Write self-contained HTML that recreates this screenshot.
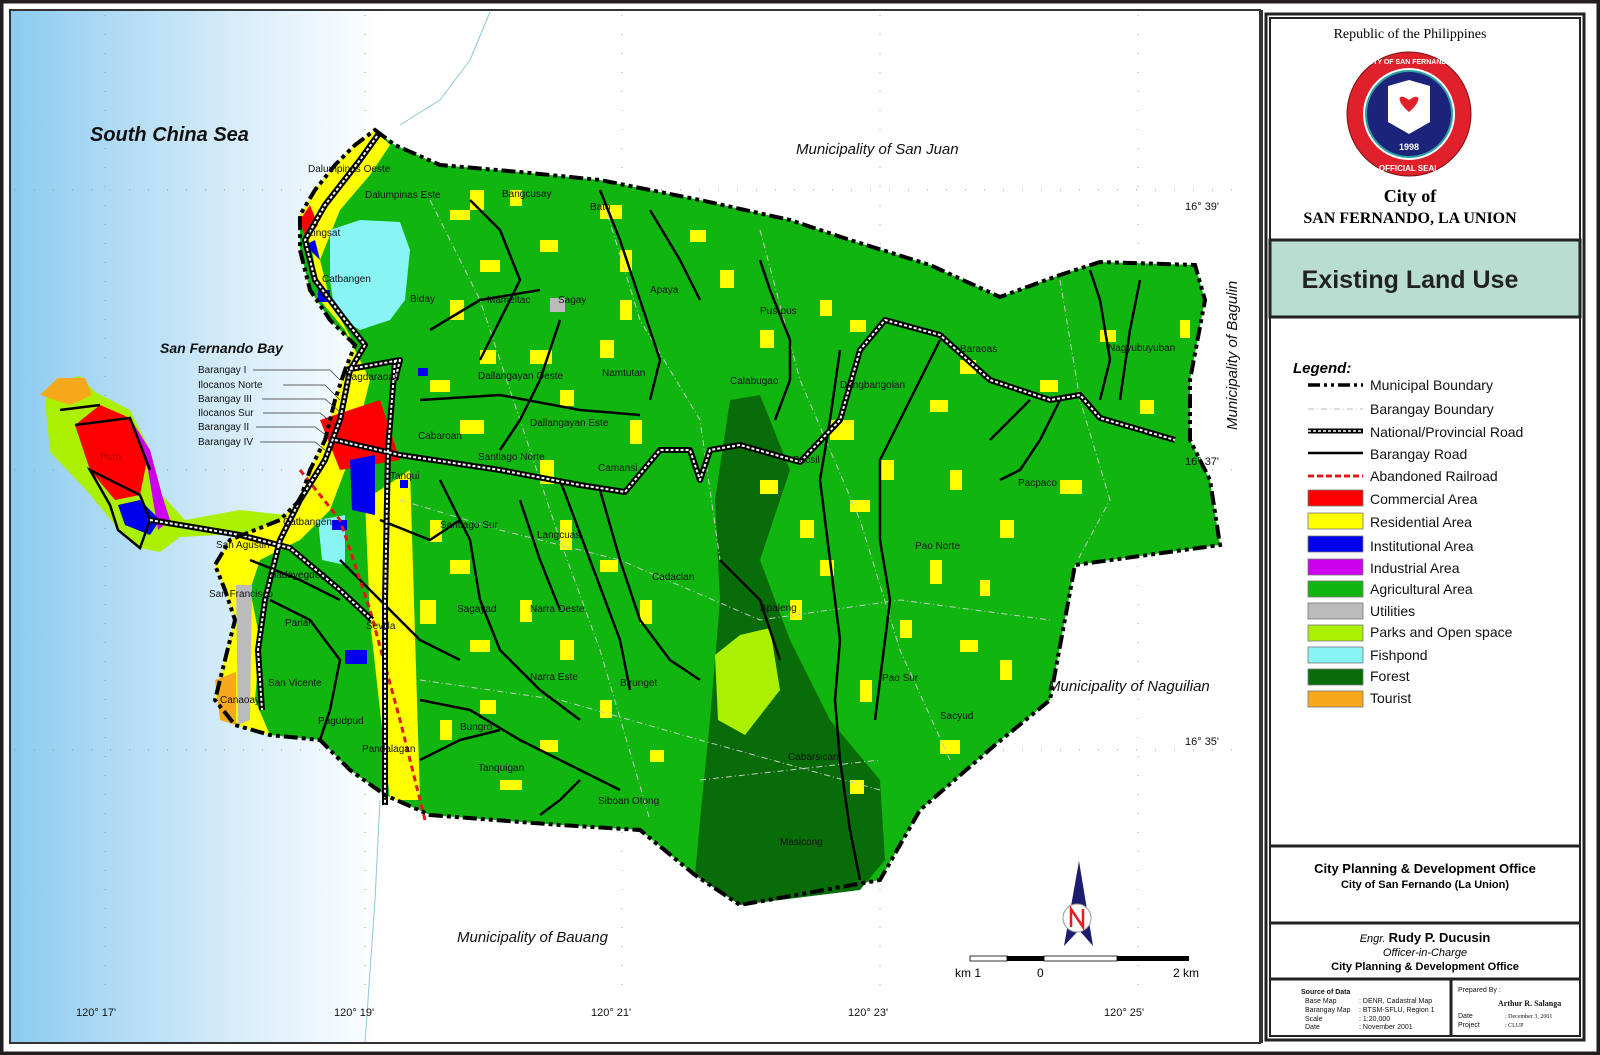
<!DOCTYPE html>
<html><head><meta charset="utf-8"><style>
html,body{margin:0;padding:0;width:1600px;height:1055px;overflow:hidden;background:#fff;font-family:"Liberation Sans",sans-serif}
#page{position:absolute;left:0;top:0;width:1600px;height:1055px}
</style></head><body><div id="page">
<svg width="1600" height="1055" style="position:absolute;left:0;top:0" font-family="Liberation Sans, sans-serif">
<defs>
<linearGradient id="sea" x1="0" x2="1" y1="0" y2="0"><stop offset="0" stop-color="#8ccbf0"/><stop offset="0.6" stop-color="#d6ecf9"/><stop offset="1" stop-color="#ffffff"/></linearGradient>
<path id="land" d="M375,130 L395,145 L440,165 L520,172 L600,180 L700,200 L790,220 L850,240 L930,265 L1000,297 L1060,275 L1100,262 L1195,265 L1205,300 L1190,380 L1190,440 L1210,480 L1220,545 L1075,565 L1050,700 L995,745 L920,810 L880,880 L740,905 L695,875 L640,830 L560,825 L430,815 L385,795 L350,770 L320,740 L270,735 L235,725 L215,700 L225,660 L235,620 L225,590 L215,565 L230,540 L280,520 L300,500 L310,470 L325,440 L335,400 L345,370 L355,345 L330,320 L310,290 L300,250 L300,215 L315,190 L335,165 L355,145 Z"/>
<path id="r1" d="M380,132 L360,160 L325,205 L305,240 L315,280 L345,320 L365,345 L350,370 L340,420 L325,460 L300,500 L280,540 L265,600 L258,650 L262,710"/>
<path id="r2" d="M335,440 L400,455 L500,470 L580,485 L625,492 L660,450 L690,450 L700,480 L710,450 L740,445 L800,462 L840,420 L860,350 L885,320 L940,335 L990,380 L1050,400 L1080,395 L1100,418 L1175,440"/>
<path id="r3" d="M395,360 L388,450 L385,600 L385,805"/>
<path id="r4" d="M150,520 L240,535 L290,548 L340,590 L372,620"/>
<path id="r5" d="M345,370 L400,360 L395,380"/>
</defs>
<rect x="0" y="0" width="1600" height="1055" fill="#fff"/>
<rect x="1.5" y="1.5" width="1597" height="1052" fill="none" stroke="#231f20" stroke-width="4"/>
<rect x="10" y="10" width="372" height="1033" fill="url(#sea)"/>
<path d="M382,10 L490,12 L470,60 L440,100 L400,125 L382,130 Z" fill="#fff"/>
<path d="M490,12 L470,60 L440,100 L400,125" fill="none" stroke="#8cc8e0" stroke-width="1"/>
<path d="M380,800 L375,900 L365,1043" fill="none" stroke="#8cc8e0" stroke-width="1"/>
<rect x="10" y="10" width="1250" height="1033" fill="none" stroke="#333" stroke-width="2"/>
<line x1="1262" y1="10" x2="1262" y2="1043" stroke="#333" stroke-width="2"/>
<g stroke="#999" stroke-width="1" stroke-dasharray="1,18">
<line x1="105" y1="15" x2="105" y2="1000"/><line x1="365" y1="15" x2="365" y2="1000"/><line x1="622" y1="15" x2="622" y2="1000"/><line x1="880" y1="15" x2="880" y2="1000"/><line x1="1138" y1="15" x2="1138" y2="1000"/>
<line x1="15" y1="190" x2="1240" y2="190"/><line x1="15" y1="470" x2="1240" y2="470"/><line x1="15" y1="750" x2="1240" y2="750"/>
</g>
<!-- peninsula -->
<path d="M45,400 L55,382 L80,376 L95,392 L130,410 L150,450 L162,495 L185,520 L240,510 L285,515 L275,532 L180,537 L160,552 L140,548 L115,525 L88,492 L50,452 Z" fill="#aaf000"/>
<path d="M40,395 L58,378 L85,378 L92,395 L70,405 Z" fill="#f7a81b"/>
<path d="M75,425 L100,405 L130,418 L148,455 L140,495 L115,500 L90,470 Z" fill="#ff0000"/>
<path d="M130,418 L150,450 L162,495 L170,520 L158,530 L148,470 Z" fill="#cc00ee"/>
<path d="M118,505 L140,500 L160,520 L150,535 L125,525 Z" fill="#0000ee"/>
<path d="M100,405 L60,410 M75,425 L130,418 L150,470 M90,470 L140,495 L150,520 L140,548 L118,530 L110,505 Z" fill="none" stroke="#000" stroke-width="2.5"/>
<!-- main land -->
<use href="#land" fill="#10b510"/>
<path d="M300,215 L315,190 L335,165 L355,145 L375,130 L390,145 L370,175 L340,210 L320,260 L330,300 L355,345 L345,370 L335,400 L325,440 L310,470 L300,500 L280,520 L230,540 L215,565 L225,590 L235,620 L225,660 L215,700 L235,725 L270,735 L255,700 L260,640 L250,590 L260,560 L300,540 L330,510 L345,470 L360,420 L370,380 L345,330 L320,300 L312,250 Z" fill="#ffff00"/>
<path d="M236,585 L252,585 L250,720 L238,725 Z" fill="#bbbbbb"/>
<path d="M215,680 L236,672 L236,725 L220,720 Z" fill="#f7a81b"/>
<path d="M365,500 L410,470 L420,800 L390,800 L370,620 Z" fill="#ffff00"/>
<path d="M320,420 L380,400 L400,460 L340,470 Z" fill="#ff0000"/>
<path d="M350,460 L375,455 L375,515 L352,510 Z" fill="#0000ee"/>
<path d="M300,220 L310,205 L318,225 L306,240 Z" fill="#ff0000"/>
<path d="M305,245 L315,240 L320,260 Z" fill="#0000ee"/>
<path d="M330,230 L360,220 L400,222 L410,250 L405,300 L390,320 L360,330 L335,315 L330,280 Z" fill="#88f4f4"/>
<path d="M318,520 L345,515 L345,565 L322,560 Z" fill="#88f4f4"/>
<path d="M550,298 L565,298 L565,312 L550,312 Z" fill="#bbbbbb"/>
<path d="M730,400 L760,395 L790,470 L760,560 L790,640 L830,720 L880,780 L885,860 L860,890 L740,905 L695,875 L700,820 L710,720 L720,600 L715,500 Z" fill="#086d08"/>
<path d="M715,655 L740,635 L770,628 L780,690 L745,735 L718,720 Z" fill="#aaf000"/>
<g fill="#ffff00">
<rect x="470" y="190" width="14" height="20"/><rect x="510" y="190" width="12" height="16"/><rect x="450" y="210" width="20" height="10"/><rect x="540" y="240" width="18" height="12"/><rect x="600" y="205" width="22" height="14"/><rect x="620" y="250" width="12" height="22"/><rect x="690" y="230" width="16" height="12"/><rect x="720" y="270" width="14" height="18"/><rect x="480" y="260" width="20" height="12"/><rect x="450" y="300" width="14" height="20"/><rect x="530" y="350" width="22" height="14"/><rect x="600" y="340" width="14" height="18"/><rect x="620" y="300" width="12" height="20"/><rect x="480" y="350" width="16" height="14"/><rect x="430" y="380" width="20" height="12"/><rect x="560" y="390" width="14" height="16"/><rect x="630" y="420" width="12" height="24"/><rect x="460" y="420" width="24" height="14"/><rect x="540" y="460" width="14" height="24"/><rect x="560" y="520" width="12" height="30"/><rect x="600" y="560" width="18" height="12"/><rect x="520" y="600" width="12" height="22"/><rect x="470" y="640" width="20" height="12"/><rect x="560" y="640" width="14" height="20"/><rect x="640" y="600" width="12" height="24"/><rect x="480" y="700" width="16" height="14"/><rect x="540" y="740" width="18" height="12"/><rect x="600" y="700" width="12" height="18"/><rect x="650" y="750" width="14" height="12"/><rect x="500" y="780" width="22" height="10"/><rect x="440" y="720" width="12" height="20"/><rect x="760" y="330" width="14" height="18"/><rect x="820" y="300" width="12" height="16"/><rect x="850" y="320" width="16" height="12"/><rect x="830" y="420" width="24" height="20"/><rect x="760" y="480" width="18" height="14"/><rect x="800" y="520" width="14" height="18"/><rect x="850" y="500" width="20" height="12"/><rect x="880" y="460" width="14" height="20"/><rect x="930" y="400" width="18" height="12"/><rect x="960" y="360" width="16" height="14"/><rect x="1040" y="380" width="18" height="12"/><rect x="1060" y="480" width="22" height="14"/><rect x="1000" y="520" width="14" height="18"/><rect x="950" y="470" width="12" height="20"/><rect x="1140" y="400" width="14" height="14"/><rect x="1100" y="330" width="16" height="12"/><rect x="1180" y="320" width="10" height="18"/><rect x="930" y="560" width="12" height="24"/><rect x="960" y="640" width="18" height="12"/><rect x="900" y="620" width="12" height="18"/><rect x="940" y="740" width="20" height="14"/><rect x="860" y="680" width="12" height="22"/><rect x="850" y="780" width="14" height="14"/><rect x="790" y="600" width="12" height="20"/><rect x="820" y="560" width="14" height="16"/><rect x="1000" y="660" width="12" height="20"/><rect x="980" y="580" width="10" height="16"/><rect x="420" y="600" width="16" height="24"/><rect x="430" y="520" width="12" height="22"/><rect x="450" y="560" width="20" height="14"/>
</g>
<g fill="#0000ee"><rect x="418" y="368" width="10" height="8"/><rect x="400" y="480" width="8" height="8"/><rect x="345" y="650" width="22" height="14"/><rect x="332" y="520" width="15" height="10"/><rect x="318" y="290" width="12" height="12"/></g>
<g fill="none" stroke="#c8c8c8" stroke-width="1" stroke-dasharray="6,3,1,3">
<path d="M430,200 L480,300 L520,420 L560,540 L600,650 L650,820"/><path d="M600,190 L640,320 L700,420 L720,560"/><path d="M760,230 L800,380 L860,520 L900,650 L950,760"/><path d="M1060,280 L1080,400 L1110,500 L1075,565"/><path d="M400,500 L500,530 L620,560 L760,620 L900,600 L1050,620"/><path d="M420,680 L560,700 L700,740 L880,790"/><path d="M700,780 L880,760"/>
</g>
<g fill="none" stroke="#000" stroke-width="2.5" stroke-linejoin="round">
<path d="M470,200 L500,230 L520,280 L500,320 L480,360"/><path d="M600,190 L620,240 L640,300 L660,360 L650,400"/><path d="M650,210 L680,260 L700,300"/><path d="M560,320 L540,380 L520,420 L500,450"/><path d="M430,330 L480,300 L540,290"/><path d="M420,400 L500,395 L580,410 L640,415"/><path d="M440,480 L470,540 L480,600 L500,650 L540,690 L580,720"/><path d="M520,500 L540,560 L560,610"/><path d="M600,490 L620,560 L640,620 L670,660 L700,680"/><path d="M560,480 L590,560 L620,640 L630,690"/><path d="M760,260 L770,290 L790,340 L790,380 L775,420"/><path d="M840,350 L830,420 L820,480 L830,560 L840,640 L835,700 L840,760 L850,830 L860,880"/><path d="M940,340 L910,400 L880,460 L880,540 L890,600 L880,680 L875,720"/><path d="M1090,270 L1100,300 L1110,360 L1100,400"/><path d="M1140,280 L1130,330 L1120,400"/><path d="M1030,400 L1010,420 L990,440"/><path d="M1060,400 L1040,440 L1020,470 L1000,480"/><path d="M420,700 L470,710 L520,740 L580,770 L620,790"/><path d="M420,760 L460,740 L500,730"/><path d="M340,560 L380,600 L420,640 L460,660"/><path d="M270,600 L310,620 L340,660 L330,710 L320,740"/><path d="M250,560 L300,580 L340,600"/><path d="M380,520 L430,540 L460,520"/><path d="M580,780 L560,800 L540,815"/><path d="M720,560 L760,600 L780,660"/>
</g>
<path d="M300,470 L340,520 L370,610 L400,720 L425,820" fill="none" stroke="#e01a1a" stroke-width="3" stroke-dasharray="6,4"/>
<g fill="none" stroke="#000" stroke-width="6" stroke-linejoin="round">
<use href="#r1"/><use href="#r2"/><use href="#r3"/><use href="#r4"/><use href="#r5"/>
</g>
<g fill="none" stroke="#fff" stroke-width="2" stroke-dasharray="3,2" stroke-linejoin="round">
<use href="#r1"/><use href="#r2"/><use href="#r3"/><use href="#r4"/><use href="#r5"/>
</g>
<use href="#land" fill="none" stroke="#000" stroke-width="4" stroke-dasharray="14,4,4,4,4,4"/>
<g font-size="10" fill="#111">
<text x="308" y="172">Dalumpinas Oeste</text><text x="365" y="198">Dalumpinas Este</text><text x="308" y="236">Lingsat</text><text x="322" y="282">Catbangen</text><text x="410" y="302">Biday</text><text x="345" y="380">Pagdaraoan</text><text x="502" y="197">Bangcusay</text><text x="590" y="210">Bato</text><text x="487" y="303">Mameltac</text><text x="558" y="303">Sagay</text><text x="650" y="293">Apaya</text><text x="760" y="314">Pus-pus</text><text x="730" y="384">Calabugao</text><text x="840" y="388">Dangbangolan</text><text x="960" y="352">Baraoas</text><text x="1108" y="351">Nagyubuyuban</text><text x="478" y="379">Dallangayan Oeste</text><text x="602" y="376">Namtutan</text><text x="530" y="426">Dallangayan Este</text><text x="418" y="439">Cabaroan</text><text x="478" y="460">Santiago Norte</text><text x="598" y="471">Camansi</text><text x="390" y="479">Tanqui</text><text x="793" y="463">Bacsil</text><text x="1018" y="486">Pacpaco</text><text x="440" y="528">Santiago Sur</text><text x="537" y="538">Langcuas</text><text x="915" y="549">Pao Norte</text><text x="283" y="525">Catbangen</text><text x="216" y="548">San Agustin</text><text x="652" y="580">Cadaclan</text><text x="760" y="611">Apaleng</text><text x="268" y="578">Madayegdeg</text><text x="209" y="597">San Francisco</text><text x="457" y="612">Sagayad</text><text x="530" y="612">Narra Oeste</text><text x="285" y="626">Parian</text><text x="366" y="629">Sevilla</text><text x="882" y="681">Pao Sur</text><text x="620" y="686">Birunget</text><text x="530" y="680">Narra Este</text><text x="268" y="686">San Vicente</text><text x="220" y="703">Canaoay</text><text x="318" y="724">Pagudpud</text><text x="940" y="719">Sacyud</text><text x="460" y="730">Bungro</text><text x="362" y="752">Pandalagan</text><text x="478" y="771">Tanquigan</text><text x="788" y="760">Cabarsican</text><text x="598" y="804">Siboan Otong</text><text x="780" y="845">Masicong</text><text x="100" y="460" fill="#a00">Poro</text>
<text x="198" y="373">Barangay I</text><text x="198" y="388">Ilocanos Norte</text><text x="198" y="402">Barangay III</text><text x="198" y="416">Ilocanos Sur</text><text x="198" y="430">Barangay II</text><text x="198" y="445">Barangay IV</text>
</g>
<g stroke="#333" stroke-width="0.7" fill="none"><path d="M253,370 L330,370 L340,380"/><path d="M283,385 L325,385 L340,400"/><path d="M262,399 L325,399 L340,412"/><path d="M263,413 L320,413 L335,425"/><path d="M256,427 L315,427 L330,438"/><path d="M260,442 L315,442 L325,450"/></g>
<g font-style="italic" fill="#111">
<text x="90" y="141" font-size="20" font-weight="bold">South China Sea</text>
<text x="160" y="353" font-size="14" font-weight="bold">San Fernando Bay</text>
<text x="796" y="154" font-size="15">Municipality of San Juan</text>
<text x="1048" y="691" font-size="15">Municipality of Naguilian</text>
<text x="457" y="942" font-size="15">Municipality of Bauang</text>
<text x="1237" y="430" font-size="15" transform="rotate(-90 1237 430)">Municipality of Bagulin</text>
</g>
<g font-size="11" fill="#111">
<text x="1185" y="210">16° 39'</text><text x="1185" y="465">16° 37'</text><text x="1185" y="745">16° 35'</text>
<text x="76" y="1016">120° 17'</text><text x="334" y="1016">120° 19'</text><text x="591" y="1016">120° 21'</text><text x="848" y="1016">120° 23'</text><text x="1104" y="1016">120° 25'</text>
</g>
<path d="M1079,861 L1064,946 L1079,930 L1093,946 Z" fill="#1c1c70"/>
<circle cx="1077" cy="918" r="14" fill="#fff" stroke="#999"/>
<path d="M1071,927 L1071,909 L1083,927 L1083,909" fill="none" stroke="#e02020" stroke-width="2.5"/>
<rect x="970" y="956" width="37" height="5" fill="#fff" stroke="#000" stroke-width="0.8"/><rect x="1007" y="956" width="37" height="5" fill="#000"/><rect x="1044" y="956" width="73" height="5" fill="#fff" stroke="#000" stroke-width="0.8"/><rect x="1117" y="956" width="72" height="5" fill="#000"/>
<g font-size="12"><text x="955" y="977">km 1</text><text x="1037" y="977">0</text><text x="1173" y="977">2 km</text></g>
<!-- right panel -->
<rect x="1266" y="14" width="318" height="1026" fill="#fff" stroke="#222" stroke-width="3"/>
<rect x="1270" y="18" width="310" height="1018" fill="none" stroke="#222" stroke-width="2"/>
<rect x="1270" y="240" width="310" height="77" fill="#b9ddd0" stroke="#222" stroke-width="3"/>
<line x1="1270" y1="846" x2="1580" y2="846" stroke="#222" stroke-width="3"/>
<line x1="1270" y1="923" x2="1580" y2="923" stroke="#222" stroke-width="3"/>
<line x1="1270" y1="979" x2="1580" y2="979" stroke="#222" stroke-width="3"/>
<line x1="1451" y1="979" x2="1451" y2="1036" stroke="#222" stroke-width="3"/>
<text x="1410" y="38" font-family="Liberation Serif, serif" font-size="14" text-anchor="middle">Republic of the Philippines</text>
<circle cx="1409" cy="114" r="62" fill="#e0202a" stroke="#7a1010" stroke-width="1"/>
<circle cx="1409" cy="114" r="46" fill="#fff"/>
<circle cx="1409" cy="114" r="43" fill="#1c237a" stroke="#2aa0a0" stroke-width="2"/>
<path d="M1388,86 L1409,80 L1430,86 L1430,122 L1409,134 L1388,122 Z" fill="#fff"/>
<path d="M1409,112 C1395,100 1398,92 1409,100 C1420,92 1423,100 1409,112 Z" fill="#e0202a"/>
<text x="1409" y="150" font-size="9" fill="#fff" font-weight="bold" text-anchor="middle">1998</text>
<text x="1409" y="64" font-size="7" fill="#fff" font-weight="bold" text-anchor="middle">CITY OF SAN FERNANDO</text>
<text x="1409" y="171" font-size="8" fill="#fff" font-weight="bold" text-anchor="middle">OFFICIAL SEAL</text>
<text x="1410" y="202" font-family="Liberation Serif, serif" font-size="18" font-weight="bold" text-anchor="middle">City of</text>
<text x="1410" y="223" font-family="Liberation Serif, serif" font-size="16" font-weight="bold" text-anchor="middle">SAN FERNANDO, LA UNION</text>
<text x="1410" y="288" font-size="25" font-weight="bold" text-anchor="middle" fill="#222">Existing Land Use</text>
<text x="1293" y="373" font-size="15" font-weight="bold" font-style="italic">Legend:</text>
<g stroke="#000" fill="none">
<line x1="1308" y1="385" x2="1363" y2="385" stroke-width="3.5" stroke-dasharray="12,4,3,4,3,4"/>
<line x1="1308" y1="409" x2="1363" y2="409" stroke="#bbb" stroke-width="1" stroke-dasharray="6,3,1,3"/>
<line x1="1308" y1="431" x2="1363" y2="431" stroke-width="5"/>
<line x1="1308" y1="431" x2="1363" y2="431" stroke="#fff" stroke-width="1.5" stroke-dasharray="3,2"/>
<line x1="1308" y1="453" x2="1363" y2="453" stroke-width="2.5"/>
<line x1="1308" y1="476" x2="1363" y2="476" stroke="#e01a1a" stroke-width="3" stroke-dasharray="6,3"/>
</g>
<g font-size="14" fill="#111">
<text x="1370" y="390">Municipal Boundary</text><text x="1370" y="414">Barangay Boundary</text><text x="1370" y="437">National/Provincial Road</text><text x="1370" y="459">Barangay Road</text><text x="1370" y="481">Abandoned Railroad</text>
<text x="1370" y="504">Commercial Area</text><text x="1370" y="527">Residential Area</text><text x="1370" y="551">Institutional Area</text><text x="1370" y="573">Industrial Area</text><text x="1370" y="594">Agricultural Area</text><text x="1370" y="616">Utilities</text><text x="1370" y="637">Parks and Open space</text><text x="1370" y="660">Fishpond</text><text x="1370" y="681">Forest</text><text x="1370" y="703">Tourist</text>
</g>
<g stroke="#777" stroke-width="0.8">
<rect x="1308" y="490" width="55" height="16" fill="#ff0000"/><rect x="1308" y="513" width="55" height="16" fill="#ffff00"/><rect x="1308" y="536" width="55" height="16" fill="#0000ee"/><rect x="1308" y="559" width="55" height="16" fill="#cc00ee"/><rect x="1308" y="581" width="55" height="16" fill="#10b510"/><rect x="1308" y="603" width="55" height="16" fill="#bbbbbb"/><rect x="1308" y="625" width="55" height="16" fill="#aaf000"/><rect x="1308" y="647" width="55" height="16" fill="#88f4f4"/><rect x="1308" y="669" width="55" height="16" fill="#086d08"/><rect x="1308" y="691" width="55" height="16" fill="#f7a81b"/>
</g>
<text x="1425" y="873" font-size="13" font-weight="bold" text-anchor="middle">City Planning &amp; Development Office</text>
<text x="1425" y="888" font-size="11" font-weight="bold" text-anchor="middle">City of San Fernando (La Union)</text>
<text x="1425" y="942" text-anchor="middle"><tspan font-size="11" font-style="italic">Engr. </tspan><tspan font-size="13" font-weight="bold">Rudy P. Ducusin</tspan></text>
<text x="1425" y="956" font-size="11" font-style="italic" text-anchor="middle">Officer-in-Charge</text>
<text x="1425" y="970" font-size="11" font-weight="bold" text-anchor="middle">City Planning &amp; Development Office</text>
<g font-size="7" fill="#111">
<text x="1301" y="994" font-weight="bold">Source of Data</text>
<text x="1305" y="1003">Base Map</text><text x="1359" y="1003">: DENR, Cadastral Map</text>
<text x="1305" y="1012">Barangay Map</text><text x="1359" y="1012">: BTSM-SFLU, Region 1</text>
<text x="1305" y="1021">Scale</text><text x="1359" y="1021">: 1:20,000</text>
<text x="1305" y="1029">Date</text><text x="1359" y="1029">: November 2001</text>
<text x="1458" y="992">Prepared By :</text>
<text x="1498" y="1006" font-family="Liberation Serif, serif" font-size="8" font-weight="bold">Arthur R. Salanga</text>
<text x="1458" y="1018">Date</text><text x="1505" y="1018" font-family="Liberation Serif, serif" font-size="6">: December 3, 2001</text>
<text x="1458" y="1027">Project</text><text x="1505" y="1027" font-family="Liberation Serif, serif" font-size="6">: CLUP</text>
</g>
</svg>
</div></body></html>
